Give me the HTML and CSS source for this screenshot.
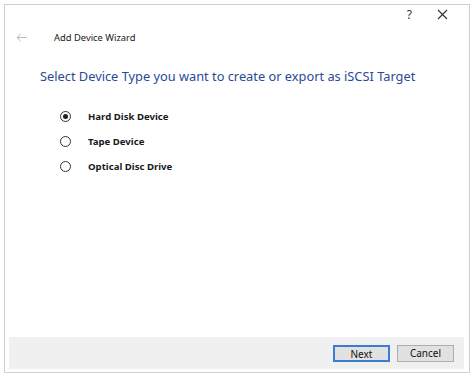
FILE: index.html
```html
<!DOCTYPE html>
<html lang="en">

<head>
    <meta charset="UTF-8">
    <title>Add Device Wizard</title>
    <link rel="stylesheet" href="styles.css">
</head>

<body>
    <div class="window">

        <div class="title-bar">
            <span class="help">?</span>
            <span class="close">
                <svg width="11" height="11" viewBox="0 0 11 11">
                    <path d="M1 1 L10 10 M10 1 L1 10" stroke="#333" stroke-width="1.1" fill="none" />
                </svg>
            </span>
        </div>

        <div class="header">
            <span class="back">
                <svg width="11" height="9" viewBox="0 0 11 9">
                    <path d="M10.5 4.5 H1 M4.8 0.8 L1 4.5 L4.8 8.2" stroke="#b8b8b8" stroke-width="1" fill="none" />
                </svg>
            </span>
            <span class="wizard-title">Add Device Wizard</span>
        </div>

        <div class="content">
            <h1 class="heading">Select Device Type you want to create or export as iSCSI Target</h1>

            <div class="options">
                <label class="option">
                    <span class="radio checked"></span>
                    <span>Hard Disk Device</span>
                </label>
                <label class="option">
                    <span class="radio"></span>
                    <span>Tape Device</span>
                </label>
                <label class="option">
                    <span class="radio"></span>
                    <span>Optical Disc Drive</span>
                </label>
            </div>
        </div>

        <div class="footer">
            <button class="btn default">Next</button>
            <button class="btn">Cancel</button>
        </div>

    </div>
</body>

</html>
```

FILE: styles.css
```css
* {
    margin: 0;
    padding: 0;
    box-sizing: border-box;
    font-family: "Noto Sans", "Liberation Sans", sans-serif;
}

body {
    background: #fff;
    color: #111;
    padding: 4px 4px 4px 4px;
}

.window {
    height: 369px;
    border: 1px solid #cfcfcf;
    display: flex;
    flex-direction: column;
    padding: 0 5px 3px 4px;
}

.title-bar {
    height: 18px;
    display: flex;
    justify-content: flex-end;
    align-items: center;
    gap: 25px;
    padding-right: 16px;
}

.help {
    font-size: 12px;
    color: #333;
}

.close {
    display: flex;
}

.header {
    height: 28px;
    display: flex;
    align-items: center;
}

.back {
    display: flex;
    width: 45px;
    padding-left: 7px;
}

.wizard-title {
    font-size: 9.4px;
    color: #1a1a1a;
}

.content {
    flex: 1;
    padding-left: 31px;
}

.heading {
    font-size: 12.8px;
    font-weight: normal;
    color: #2a4a96;
    margin-top: 16px;
}

.options {
    margin-top: 25px;
    display: flex;
    flex-direction: column;
    gap: 12px;
    padding-left: 20px;
}

.option {
    display: flex;
    align-items: center;
    gap: 17px;
    font-size: 9.6px;
    font-weight: bold;
    color: #1a1a1a;
}

.radio {
    width: 11px;
    height: 11px;
    border: 1px solid #333;
    border-radius: 50%;
    display: flex;
    align-items: center;
    justify-content: center;
}

.radio.checked::after {
    content: "";
    width: 5px;
    height: 5px;
    border-radius: 50%;
    background: #222;
}

.footer {
    height: 32px;
    background: #f0f0f0;
    display: flex;
    justify-content: flex-end;
    align-items: center;
    gap: 7px;
    padding-right: 10px;
}

.btn {
    width: 57px;
    height: 17px;
    font-size: 10px;
    color: #111;
    background: #e1e1e1;
    border: 1px solid #adadad;
}

.btn.default {
    border: 2px solid #3a7bd5;
}
```
